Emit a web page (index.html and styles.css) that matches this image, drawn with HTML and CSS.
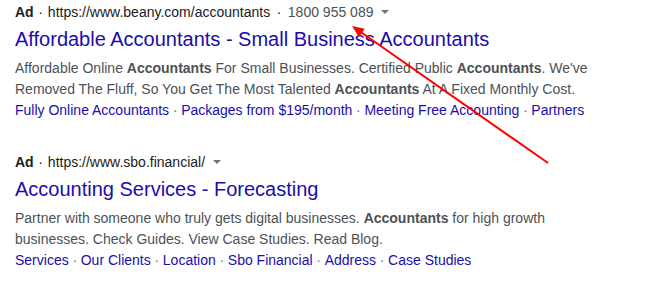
FILE: index.html
```html
<!DOCTYPE html>
<html>
<head>
<meta charset="utf-8">
<link rel="stylesheet" href="styles.css">
</head>
<body>
<div class="results">
  <div class="ad">
    <div class="adline"><b class="tag">Ad</b><span class="dot">·</span><span class="url">https://www.beany.com/accountants</span><span class="dot dot-wide">·</span><span class="phone">1800 955 089</span><span class="caret"></span></div>
    <a class="title">Affordable Accountants - Small Business Accountants</a>
    <div class="desc">Affordable Online <b>Accountants</b> For Small Businesses. Certified Public <b>Accountants</b>. We've Removed The Fluff, So You Get The Most Talented <b>Accountants</b> At A Fixed Monthly Cost.</div>
    <div class="links"><a>Fully Online Accountants</a><span class="sep">·</span><a>Packages from $195/month</a><span class="sep">·</span><a>Meeting Free Accounting</a><span class="sep">·</span><a>Partners</a></div>
  </div>
  <div class="ad">
    <div class="adline"><b class="tag">Ad</b><span class="dot">·</span><span class="url">https://www.sbo.financial/</span><span class="caret"></span></div>
    <a class="title">Accounting Services - Forecasting</a>
    <div class="desc">Partner with someone who truly gets digital businesses. <b>Accountants</b> for high growth businesses. Check Guides. View Case Studies. Read Blog.</div>
    <div class="links"><a>Services</a><span class="sep">·</span><a>Our Clients</a><span class="sep">·</span><a>Location</a><span class="sep">·</span><a>Sbo Financial</a><span class="sep">·</span><a>Address</a><span class="sep">·</span><a>Case Studies</a></div>
  </div>
</div>
<svg class="arrow" width="650" height="283" viewBox="0 0 650 283">
  <line x1="548" y1="163" x2="360" y2="31.5" stroke="#f00" stroke-width="2"/>
  <polygon points="352,26 364.7,28.8 359,37" fill="#f00"/>
</svg>
</body>
</html>
```
FILE: styles.css
```css
html, body {
  margin: 0;
  padding: 0;
  background: #fff;
}
body {
  font-family: "Liberation Sans", Arial, sans-serif;
  width: 650px;
  height: 283px;
  overflow: hidden;
  position: relative;
}
.results {
  padding-left: 15px;
  width: 600px;
  display: flex;
  flex-direction: column;
  gap: 29px;
}
.ad {
  display: flex;
  flex-direction: column;
}
.adline {
  padding-top: 1px;
  font-size: 14px;
  line-height: 22px;
  color: #202124;
  display: flex;
  align-items: center;
}
.tag {
  font-weight: bold;
  color: #202124;
}
.dot {
  padding: 0 5px 0 4.5px;
}
.dot-wide {
  padding: 0 6.5px;
}
.phone {
  color: #4d5156;
}
.caret {
  margin-left: 8px;
  width: 0;
  height: 0;
  border-left: 4px solid transparent;
  border-right: 4px solid transparent;
  border-top: 4px solid #70757a;
}
.title {
  margin-top: 3px;
  font-size: 20px;
  line-height: 26px;
  color: #1a0dab;
}
.desc {
  margin-top: 6px;
  font-size: 14px;
  line-height: 21px;
  color: #4d5156;
}
.desc b {
  color: #4d5156;
}
.links {
  font-size: 14px;
  line-height: 21px;
  color: #4d5156;
}
.links a {
  color: #1a0dab;
}
.sep {
  padding: 0 3.7px;
  color: #70757a;
}
.arrow {
  position: absolute;
  left: 0;
  top: 0;
}
```
